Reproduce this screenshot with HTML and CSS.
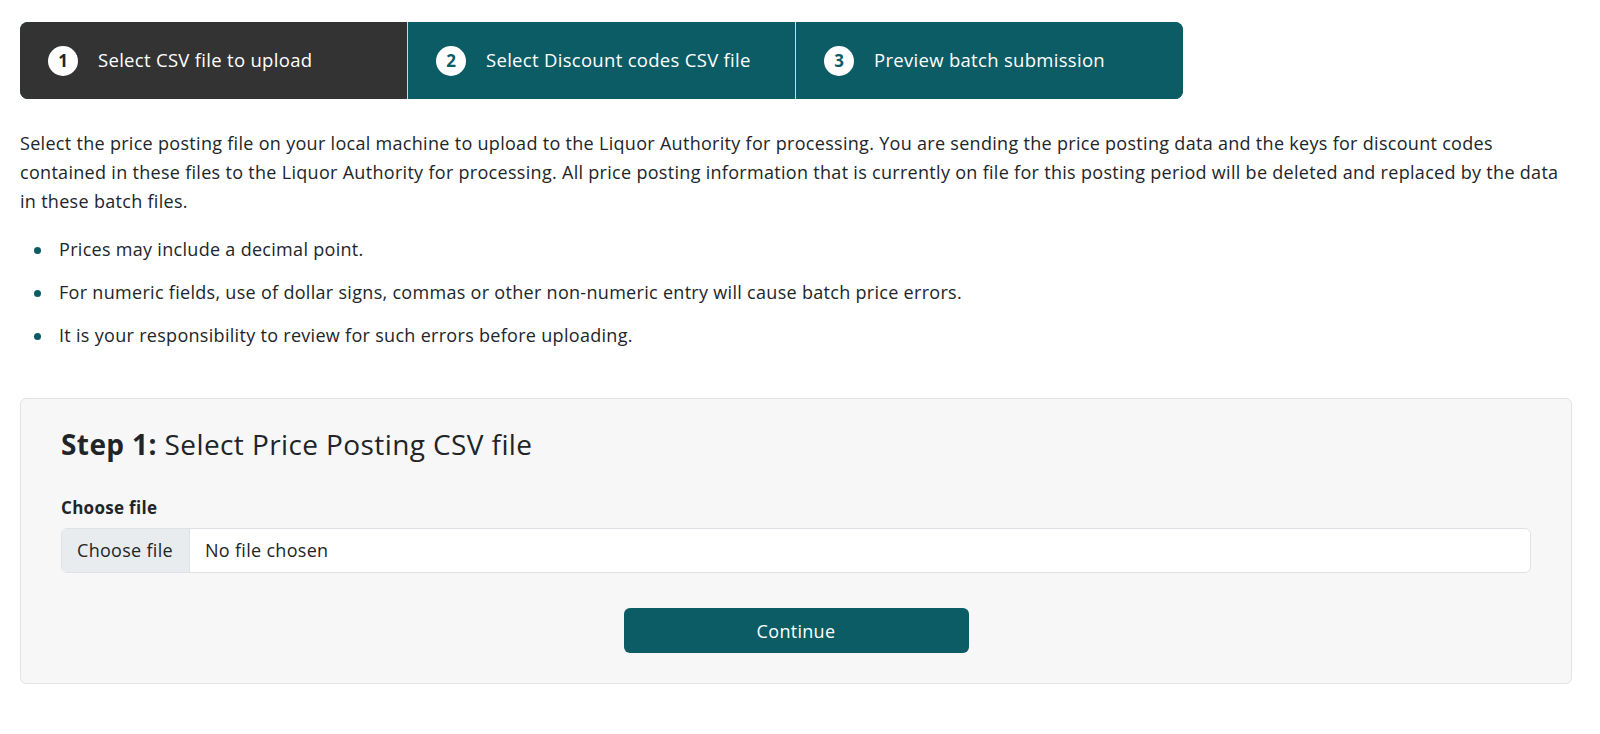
FILE: index.html
```html
<!DOCTYPE html>
<html lang="en">
<head>
<meta charset="utf-8">
<title>Batch upload</title>
<link rel="stylesheet" href="styles.css">
</head>
<body>
<main class="page">
  <nav class="steps">
    <div class="step step-active"><span class="step-num">1</span><span class="step-label">Select CSV file to upload</span></div>
    <div class="step"><span class="step-num">2</span><span class="step-label">Select Discount codes CSV file</span></div>
    <div class="step"><span class="step-num">3</span><span class="step-label">Preview batch submission</span></div>
  </nav>

  <p class="intro">Select the price posting file on your local machine to upload to the Liquor Authority for processing. You are sending the price posting data and the keys for discount codes contained in these files to the Liquor Authority for processing. All price posting information that is currently on file for this posting period will be deleted and replaced by the data in these batch files.</p>

  <ul class="notes">
    <li>Prices may include a decimal point.</li>
    <li>For numeric fields, use of dollar signs, commas or other non-numeric entry will cause batch price errors.</li>
    <li>It is your responsibility to review for such errors before uploading.</li>
  </ul>

  <section class="card">
    <h2 class="card-title"><strong>Step 1:</strong> Select Price Posting CSV file</h2>
    <label class="field-label">Choose file</label>
    <div class="file-input">
      <span class="file-btn">Choose file</span>
      <span class="file-name">No file chosen</span>
    </div>
    <div class="actions">
      <button class="btn-primary" type="button">Continue</button>
    </div>
  </section>
</main>
</body>
</html>
```
FILE: styles.css
```css
* { box-sizing: border-box; }
html, body { margin: 0; padding: 0; background: #ffffff; }
body {
  font-family: "Open Sans", "Noto Sans", "DejaVu Sans", sans-serif;
  color: #212529;
  font-size: 18px;
  letter-spacing: 0.3px;
  line-height: 28.8px;
}
.page {
  width: 1572px;
  padding: 22px 0 0 20px;
}
.steps {
  display: flex;
  width: 1163px;
  height: 77px;
  border-radius: 8px;
  overflow: hidden;
  background: #0b5c65;
}
.step {
  flex: 1 1 0;
  display: flex;
  align-items: center;
  padding-left: 28px;
  color: #ffffff;
  background: #0b5c65;
  border-left: 1px solid #cfd8da;
}
.step:first-child { border-left: none; }
.step-active { background: #333333; }
.step-num {
  width: 30px;
  height: 30px;
  border-radius: 50%;
  background: #ffffff;
  color: #212529;
  display: flex;
  align-items: center;
  justify-content: center;
  font-weight: 700;
  font-size: 17px;
  letter-spacing: 0;
  line-height: 1;
  margin-right: 20px;
}
.step:not(.step-active) .step-num { color: #0b5c65; }
.step-label {
  font-size: 18.5px;
  font-weight: 500;
}
.intro {
  margin: 30px 0 20px;
}
.notes {
  margin: 0;
  padding: 0 0 0 39px;
  list-style: none;
}
.notes li {
  position: relative;
  margin-bottom: 14px;
}
.notes li::before {
  content: "";
  position: absolute;
  left: -25px;
  top: 12px;
  width: 7px;
  height: 7px;
  border-radius: 50%;
  background: #0b5c65;
}
.card {
  margin-top: 48px;
  border: 1px solid #e3e3e3;
  border-radius: 6px;
  background: #f7f7f7;
  padding: 29px 40px 30px 40px;
}
.card-title {
  margin: 0 0 35px;
  font-size: 28px;
  letter-spacing: 0.4px;
  font-weight: 400;
  line-height: 1.2;
}
.card-title strong { font-weight: 700; }
.field-label {
  display: block;
  font-size: 17px;
  font-weight: 700;
  line-height: 1.4;
  margin-bottom: 8px;
}
.file-input {
  display: flex;
  height: 45px;
  border: 1px solid #dee2e6;
  border-radius: 6px;
  background: #ffffff;
  overflow: hidden;
}
.file-btn {
  display: flex;
  align-items: center;
  padding: 0 15px;
  background: #e9ecef;
  border-right: 1px solid #dee2e6;
  width: 128px;
}
.file-name {
  display: flex;
  align-items: center;
  padding-left: 15px;
}
.actions {
  display: flex;
  justify-content: center;
  margin-top: 35px;
}
.btn-primary {
  width: 345px;
  height: 45px;
  border: none;
  border-radius: 6px;
  background: #0b5c65;
  color: #ffffff;
  font-family: inherit;
  font-size: 18px;
  letter-spacing: 0.3px;
  font-weight: 500;
}
```
